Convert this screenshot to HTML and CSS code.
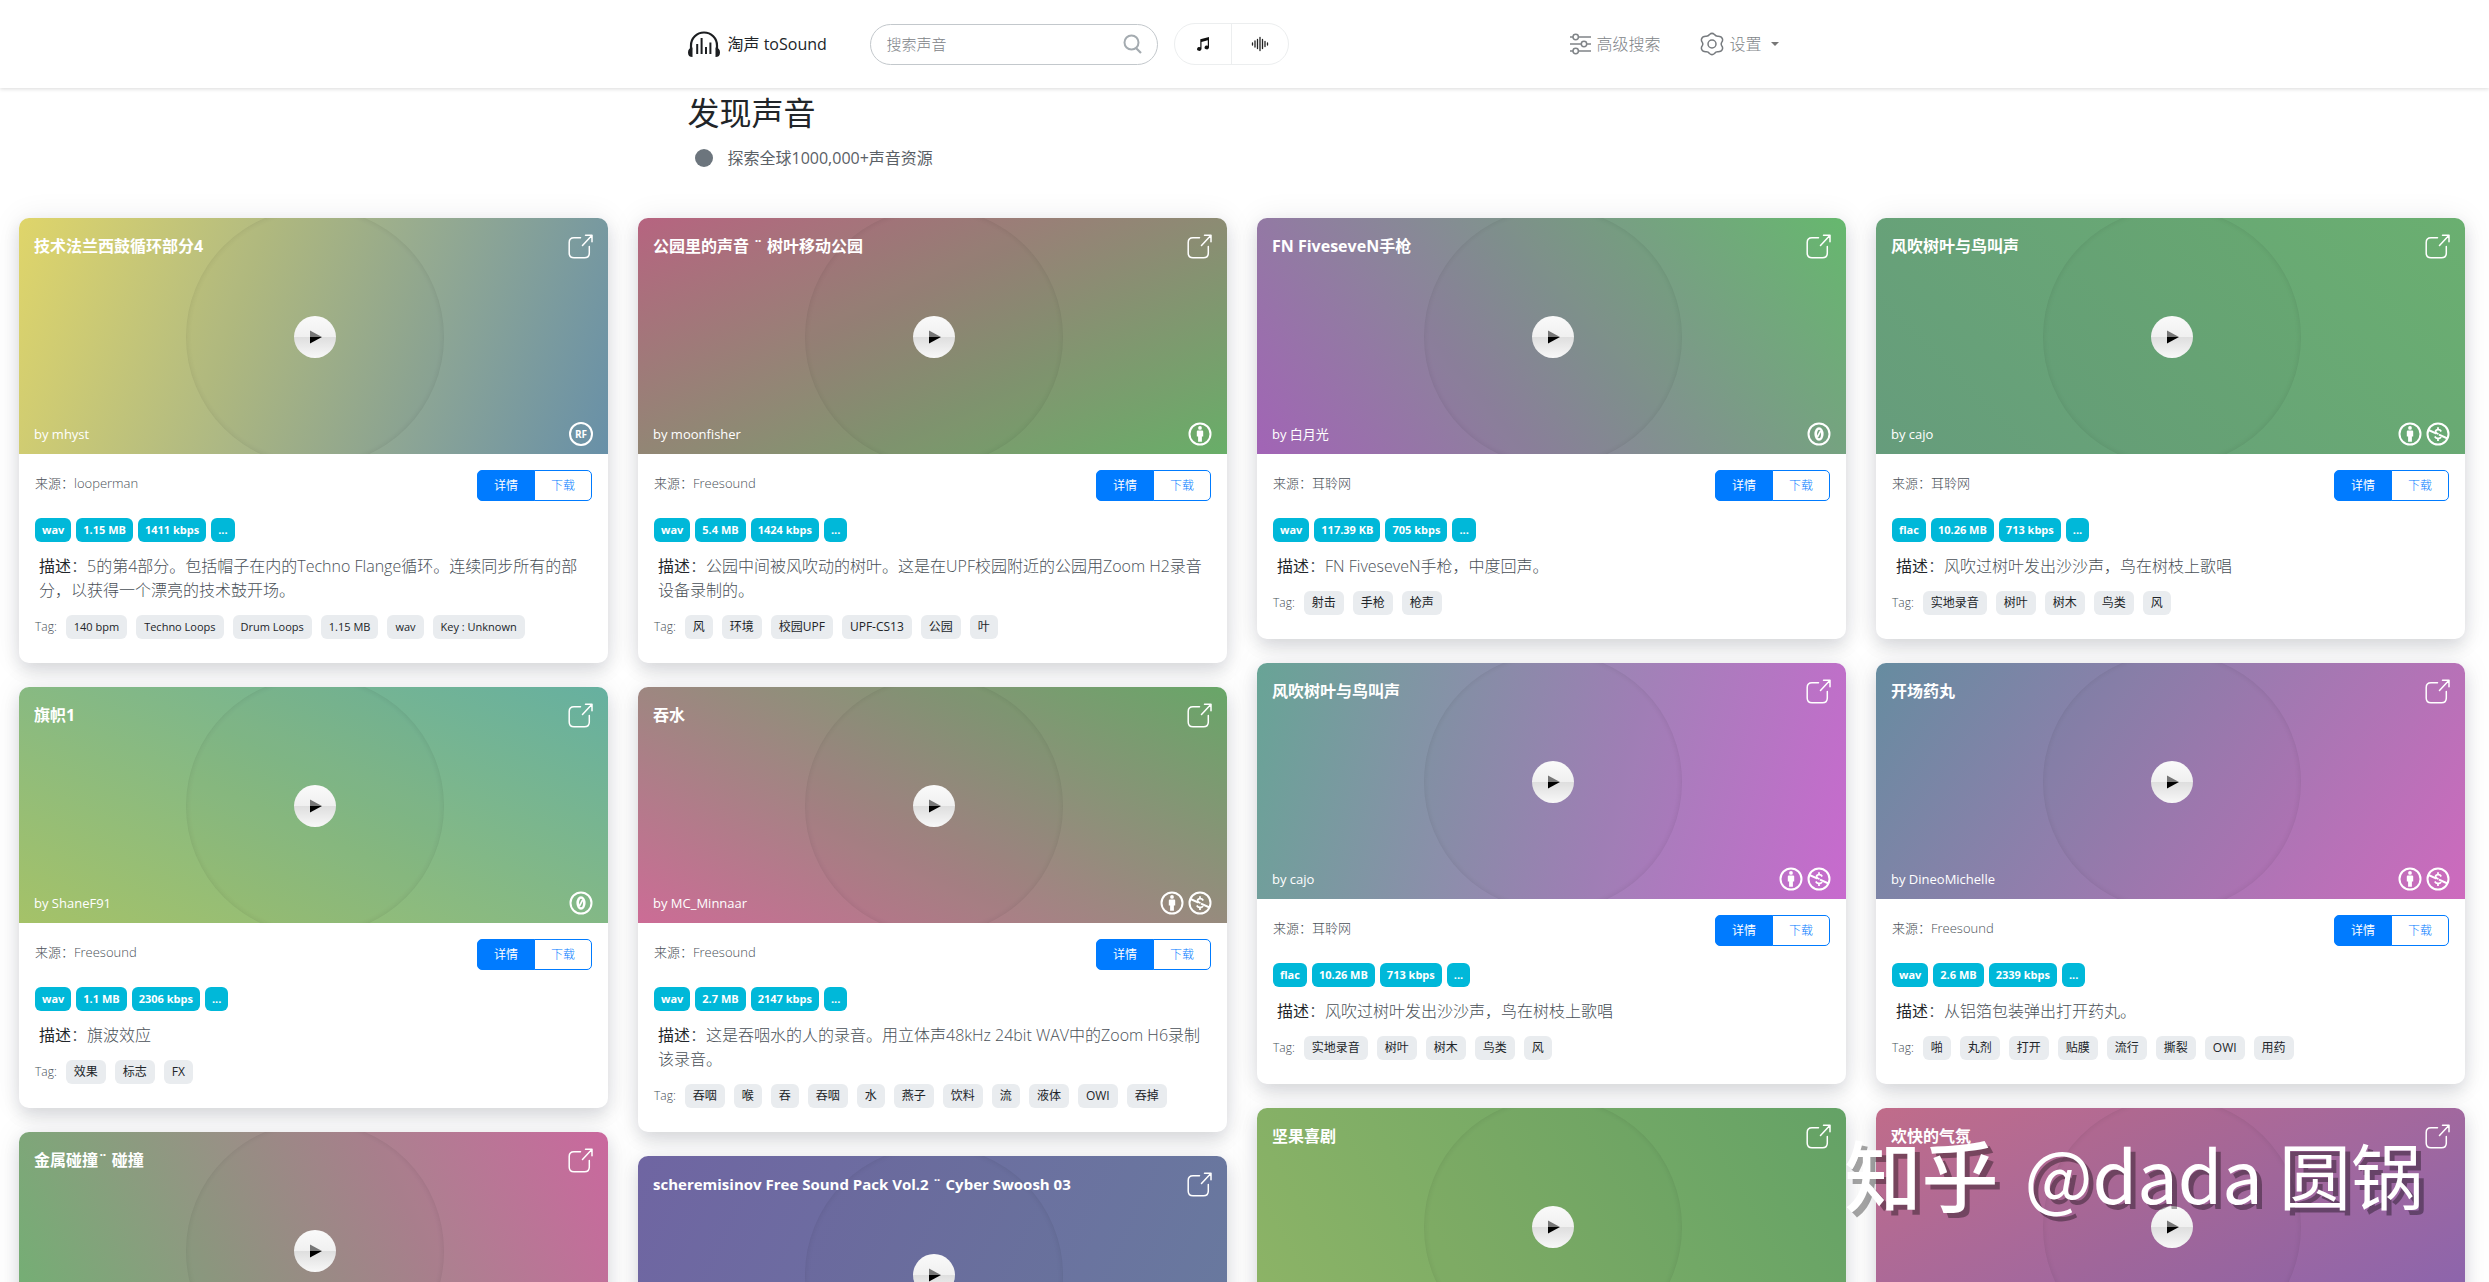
FILE: index.html
```html
<!DOCTYPE html>
<html lang="zh-CN">
<head>
<meta charset="utf-8">
<meta name="viewport" content="width=device-width, initial-scale=1">
<title>淘声 toSound</title>
<link rel="stylesheet" href="styles.css">
</head>
<body>
<svg class="sprite" aria-hidden="true">
  <symbol id="i-open" viewBox="0 0 25 25"><g fill="none" stroke="currentColor" stroke-width="1.5" stroke-linecap="round" stroke-linejoin="round"><path d="M12.5 3.7H6Q1.2 3.7 1.2 8.500V19Q1.200 23.800 6 23.800H16.500Q21.300 23.800 21.300 19V12.500"/><path d="M14.500 11.500 24 1.200M17.500 1.200H24V7.800"/></g></symbol>
  <symbol id="i-by" viewBox="0 0 24 24"><circle cx="12" cy="12" r="10.500" fill="none" stroke="currentColor" stroke-width="2"/><circle cx="12" cy="5.900" r="1.900" fill="currentColor"/><path d="M9.800 8.500h4.400q1 0 1 1v5h-1.300v5.200h-3.800v-5.200H8.800v-5q0-1 1-1z" fill="currentColor"/></symbol>
  <symbol id="i-nc" viewBox="0 0 24 24"><g fill="none" stroke="currentColor" stroke-width="2"><circle cx="12" cy="12" r="10.500"/><path d="M2.500 8 10.500 11.600M13 12.700 21.500 16.500"/><path d="M15.200 9.500Q14.300 7.700 12.200 7.700 9.800 7.700 9.500 9.500M8.800 14.500Q9.800 16.500 12 16.500 14.500 16.500 14.800 14.800M12 5.200v2.500M12 16.500V19M9.500 9.500Q9.600 11 12.500 12.200" stroke-width="1.800"/></g></symbol>
  <symbol id="i-zero" viewBox="0 0 24 24"><g fill="none" stroke="currentColor"><circle cx="12" cy="12" r="10.500" stroke-width="2"/><ellipse cx="12" cy="12" rx="3.300" ry="5.500" stroke-width="2.600"/><path d="M13.800 8.600 10.200 15.400" stroke-width="1.800"/></g></symbol>
  <symbol id="i-play" viewBox="0 0 12 14"><path d="M0 .5 12 7H0z" fill="#777"/><path d="M0 7H12L0 13.500z" fill="#000"/></symbol>
</svg>

<header class="topbar">
  <div class="topbar-inner">
    <a class="brand" href="#">
      <svg class="brand-icon" viewBox="0 0 32 28" aria-hidden="true"><path d="M3 20V15.500a13 13 0 0 1 26 0V20" fill="none" stroke="#1c1e21" stroke-width="2.200"/><path d="M4.500 17.500v9.500Q0 27 0 22.500T4.500 17.500zM27.500 17.500v9.500q4.500 0 4.500-4.500t-4.500-5z" fill="#1c1e21"/><path d="M9.200 14v10M13.600 8v16M18 17v7M22.400 12.500V24" stroke="#1c1e21" stroke-width="2"/></svg>
      <span>淘声 toSound</span>
    </a>
    <form class="search" role="search">
      <input type="search" placeholder="搜索声音" aria-label="搜索声音">
      <svg class="search-icon" viewBox="0 0 20 20" aria-hidden="true"><circle cx="8.500" cy="8.500" r="7" fill="none" stroke="#a4abb0" stroke-width="2"/><path d="M13 14l5 5" stroke="#a4abb0" stroke-width="2.200"/></svg>
    </form>
    <div class="modes">
      <button type="button" aria-label="音乐"><svg width="16" height="16" viewBox="0 0 16 16" fill="#111" aria-hidden="true"><path d="M5.300 3.300 14 1v10.600a2.200 1.900 0 1 1-1.200-1.800V4.200L6.500 5.900v7.200a2.200 1.900 0 1 1-1.200-1.800z"/></svg></button>
      <button type="button" aria-label="音效"><svg width="18" height="16" viewBox="0 0 18 16" aria-hidden="true"><path d="M1.500 7v2M4 5v6M6.500 3.500v9M9 1.500v13M11.500 3.500v9M14 5.500v5M16.500 7v2" stroke="#222" stroke-width="1.300" stroke-linecap="round"/></svg></button>
    </div>
    <nav class="links">
      <a href="#"><svg width="21" height="22" viewBox="0 0 21 22" fill="none" stroke="#808488" stroke-width="1.500" aria-hidden="true"><path d="M0 4h3M8.500 4H21M0 11h11M17 11h4M0 18h3M8.500 18H21"/><circle cx="5.700" cy="4" r="2.700"/><circle cx="14" cy="11" r="2.700"/><circle cx="5.700" cy="18" r="2.700"/></svg>高级搜索</a>
      <a href="#"><svg width="24" height="24" viewBox="0 0 24 24" fill="none" stroke="#777b7f" stroke-width="1.500" stroke-linejoin="round" aria-hidden="true"><path d="M9.500 2.500Q12 .3 14.500 2.500 15.800 4.500 18 4.300 21.500 4.200 22.400 6.800 23 9 21.700 10.300 20.700 12 21.700 13.700 23 15.200 22.400 17.200 21.500 19.800 18 19.700 15.800 19.500 14.500 21.500 12 23.700 9.500 21.500 8.200 19.500 6 19.700 2.500 19.800 1.600 17.200 1 15.200 2.300 13.700 3.300 12 2.300 10.300 1 9 1.600 6.800 2.500 4.200 6 4.300 8.200 4.500 9.500 2.500z"/><circle cx="12" cy="12" r="4"/></svg>设置<i class="caret"></i></a>
    </nav>
  </div>
</header>

<main>
  <section class="intro">
    <h1>发现声音</h1>
    <p><i class="dot"></i>探索全球1000,000+声音资源</p>
  </section>

  <section class="wall">
    <div class="col">
      <article class="card">
        <div class="art art-1"><button class="play" type="button" aria-label="播放"><svg width="12" height="14"><use href="#i-play"/></svg></button>
          <div class="art-row"><h2>技术法兰西鼓循环部分4</h2><a href="#" aria-label="打开"><svg width="25" height="25"><use href="#i-open"/></svg></a></div>
          <div class="art-row"><span>by mhyst</span><span class="lic"><b class="rf">RF</b></span></div></div>
        <div class="info">
          <div class="src"><span>来源：looperman</span><span class="acts"><button type="button">详情</button><button type="button">下载</button></span></div>
          <div class="meta"><b>wav</b><b>1.15 MB</b><b>1411 kbps</b><b>...</b></div>
          <p><em>描述</em>：5的第4部分。包括帽子在内的Techno Flange循环。连续同步所有的部分，以获得一个漂亮的技术鼓开场。</p>
          <div class="tags tags-latin">Tag: <a href="#">140 bpm</a><a href="#">Techno Loops</a><a href="#">Drum Loops</a><a href="#">1.15 MB</a><a href="#">wav</a><a href="#">Key : Unknown</a></div>
        </div>
      </article>
      <article class="card">
        <div class="art art-2"><button class="play" type="button" aria-label="播放"><svg width="12" height="14"><use href="#i-play"/></svg></button>
          <div class="art-row"><h2>旗帜1</h2><a href="#" aria-label="打开"><svg width="25" height="25"><use href="#i-open"/></svg></a></div>
          <div class="art-row"><span>by ShaneF91</span><span class="lic"><svg width="24" height="24"><use href="#i-zero"/></svg></span></div></div>
        <div class="info">
          <div class="src"><span>来源：Freesound</span><span class="acts"><button type="button">详情</button><button type="button">下载</button></span></div>
          <div class="meta"><b>wav</b><b>1.1 MB</b><b>2306 kbps</b><b>...</b></div>
          <p><em>描述</em>：旗波效应</p>
          <div class="tags">Tag: <a href="#">效果</a><a href="#">标志</a><a href="#">FX</a></div>
        </div>
      </article>
      <article class="card">
        <div class="art art-3"><button class="play" type="button" aria-label="播放"><svg width="12" height="14"><use href="#i-play"/></svg></button>
          <div class="art-row"><h2>金属碰撞¨ 碰撞</h2><a href="#" aria-label="打开"><svg width="25" height="25"><use href="#i-open"/></svg></a></div></div>
      </article>
    </div>

    <div class="col">
      <article class="card">
        <div class="art art-4"><button class="play" type="button" aria-label="播放"><svg width="12" height="14"><use href="#i-play"/></svg></button>
          <div class="art-row"><h2>公园里的声音 ¨ 树叶移动公园</h2><a href="#" aria-label="打开"><svg width="25" height="25"><use href="#i-open"/></svg></a></div>
          <div class="art-row"><span>by moonfisher</span><span class="lic"><svg width="24" height="24"><use href="#i-by"/></svg></span></div></div>
        <div class="info">
          <div class="src"><span>来源：Freesound</span><span class="acts"><button type="button">详情</button><button type="button">下载</button></span></div>
          <div class="meta"><b>wav</b><b>5.4 MB</b><b>1424 kbps</b><b>...</b></div>
          <p><em>描述</em>：公园中间被风吹动的树叶。这是在UPF校园附近的公园用Zoom H2录音设备录制的。</p>
          <div class="tags">Tag: <a href="#">风</a><a href="#">环境</a><a href="#">校园UPF</a><a href="#">UPF-CS13</a><a href="#">公园</a><a href="#">叶</a></div>
        </div>
      </article>
      <article class="card">
        <div class="art art-5"><button class="play" type="button" aria-label="播放"><svg width="12" height="14"><use href="#i-play"/></svg></button>
          <div class="art-row"><h2>吞水</h2><a href="#" aria-label="打开"><svg width="25" height="25"><use href="#i-open"/></svg></a></div>
          <div class="art-row"><span>by MC_Minnaar</span><span class="lic"><svg width="24" height="24"><use href="#i-by"/></svg><svg width="24" height="24"><use href="#i-nc"/></svg></span></div></div>
        <div class="info">
          <div class="src"><span>来源：Freesound</span><span class="acts"><button type="button">详情</button><button type="button">下载</button></span></div>
          <div class="meta"><b>wav</b><b>2.7 MB</b><b>2147 kbps</b><b>...</b></div>
          <p><em>描述</em>：这是吞咽水的人的录音。用立体声48kHz 24bit WAV中的Zoom H6录制该录音。</p>
          <div class="tags">Tag: <a href="#">吞咽</a><a href="#">喉</a><a href="#">吞</a><a href="#">吞咽</a><a href="#">水</a><a href="#">燕子</a><a href="#">饮料</a><a href="#">流</a><a href="#">液体</a><a href="#">OWI</a><a href="#">吞掉</a></div>
        </div>
      </article>
      <article class="card">
        <div class="art art-6"><button class="play" type="button" aria-label="播放"><svg width="12" height="14"><use href="#i-play"/></svg></button>
          <div class="art-row"><h2 class="title-latin">scheremisinov Free Sound Pack Vol.2 ¨ Cyber Swoosh 03</h2><a href="#" aria-label="打开"><svg width="25" height="25"><use href="#i-open"/></svg></a></div></div>
      </article>
    </div>

    <div class="col">
      <article class="card">
        <div class="art art-7"><button class="play" type="button" aria-label="播放"><svg width="12" height="14"><use href="#i-play"/></svg></button>
          <div class="art-row"><h2>FN FiveseveN手枪</h2><a href="#" aria-label="打开"><svg width="25" height="25"><use href="#i-open"/></svg></a></div>
          <div class="art-row"><span>by 白月光</span><span class="lic"><svg width="24" height="24"><use href="#i-zero"/></svg></span></div></div>
        <div class="info">
          <div class="src"><span>来源：耳聆网</span><span class="acts"><button type="button">详情</button><button type="button">下载</button></span></div>
          <div class="meta"><b>wav</b><b>117.39 KB</b><b>705 kbps</b><b>...</b></div>
          <p><em>描述</em>：FN FiveseveN手枪，中度回声。</p>
          <div class="tags">Tag: <a href="#">射击</a><a href="#">手枪</a><a href="#">枪声</a></div>
        </div>
      </article>
      <article class="card">
        <div class="art art-8"><button class="play" type="button" aria-label="播放"><svg width="12" height="14"><use href="#i-play"/></svg></button>
          <div class="art-row"><h2>风吹树叶与鸟叫声</h2><a href="#" aria-label="打开"><svg width="25" height="25"><use href="#i-open"/></svg></a></div>
          <div class="art-row"><span>by cajo</span><span class="lic"><svg width="24" height="24"><use href="#i-by"/></svg><svg width="24" height="24"><use href="#i-nc"/></svg></span></div></div>
        <div class="info">
          <div class="src"><span>来源：耳聆网</span><span class="acts"><button type="button">详情</button><button type="button">下载</button></span></div>
          <div class="meta"><b>flac</b><b>10.26 MB</b><b>713 kbps</b><b>...</b></div>
          <p><em>描述</em>：风吹过树叶发出沙沙声，鸟在树枝上歌唱</p>
          <div class="tags">Tag: <a href="#">实地录音</a><a href="#">树叶</a><a href="#">树木</a><a href="#">鸟类</a><a href="#">风</a></div>
        </div>
      </article>
      <article class="card">
        <div class="art art-9"><button class="play" type="button" aria-label="播放"><svg width="12" height="14"><use href="#i-play"/></svg></button>
          <div class="art-row"><h2>坚果喜剧</h2><a href="#" aria-label="打开"><svg width="25" height="25"><use href="#i-open"/></svg></a></div></div>
      </article>
    </div>

    <div class="col">
      <article class="card">
        <div class="art art-10"><button class="play" type="button" aria-label="播放"><svg width="12" height="14"><use href="#i-play"/></svg></button>
          <div class="art-row"><h2>风吹树叶与鸟叫声</h2><a href="#" aria-label="打开"><svg width="25" height="25"><use href="#i-open"/></svg></a></div>
          <div class="art-row"><span>by cajo</span><span class="lic"><svg width="24" height="24"><use href="#i-by"/></svg><svg width="24" height="24"><use href="#i-nc"/></svg></span></div></div>
        <div class="info">
          <div class="src"><span>来源：耳聆网</span><span class="acts"><button type="button">详情</button><button type="button">下载</button></span></div>
          <div class="meta"><b>flac</b><b>10.26 MB</b><b>713 kbps</b><b>...</b></div>
          <p><em>描述</em>：风吹过树叶发出沙沙声，鸟在树枝上歌唱</p>
          <div class="tags">Tag: <a href="#">实地录音</a><a href="#">树叶</a><a href="#">树木</a><a href="#">鸟类</a><a href="#">风</a></div>
        </div>
      </article>
      <article class="card">
        <div class="art art-11"><button class="play" type="button" aria-label="播放"><svg width="12" height="14"><use href="#i-play"/></svg></button>
          <div class="art-row"><h2>开场药丸</h2><a href="#" aria-label="打开"><svg width="25" height="25"><use href="#i-open"/></svg></a></div>
          <div class="art-row"><span>by DineoMichelle</span><span class="lic"><svg width="24" height="24"><use href="#i-by"/></svg><svg width="24" height="24"><use href="#i-nc"/></svg></span></div></div>
        <div class="info">
          <div class="src"><span>来源：Freesound</span><span class="acts"><button type="button">详情</button><button type="button">下载</button></span></div>
          <div class="meta"><b>wav</b><b>2.6 MB</b><b>2339 kbps</b><b>...</b></div>
          <p><em>描述</em>：从铝箔包装弹出打开药丸。</p>
          <div class="tags">Tag: <a href="#">啪</a><a href="#">丸剂</a><a href="#">打开</a><a href="#">贴膜</a><a href="#">流行</a><a href="#">撕裂</a><a href="#">OWI</a><a href="#">用药</a></div>
        </div>
      </article>
      <article class="card">
        <div class="art art-12"><button class="play" type="button" aria-label="播放"><svg width="12" height="14"><use href="#i-play"/></svg></button>
          <div class="art-row"><h2>欢快的气氛</h2><a href="#" aria-label="打开"><svg width="25" height="25"><use href="#i-open"/></svg></a></div></div>
      </article>
    </div>
  </section>
</main>

<div class="watermark"><b>知乎</b><span>@dada 圆锅</span></div>
</body>
</html>
```

FILE: styles.css
```css
* { box-sizing: border-box; }

body {
  margin: 0;
  height: 100vh;
  overflow: hidden;
  position: relative;
  background: #fff;
  color: #212529;
  font: 300 16px/24px "Open Sans", "Noto Sans CJK SC", sans-serif;
}

a { color: inherit; text-decoration: none; }
button { font: inherit; cursor: pointer; }
svg { display: block; flex: none; }
.sprite { position: absolute; width: 0; height: 0; }

/* Top bar */
.topbar {
  height: 88px;
  background: #fff;
  box-shadow: 0 1px 4px rgba(0, 0, 0, .15);
}
.topbar-inner,
.intro { max-width: 1114px; margin: 0 auto; }
.topbar-inner { height: 100%; display: flex; align-items: center; }
.brand { display: flex; align-items: center; gap: 8px; width: 182px; font-weight: 400; font-size: 16px; white-space: nowrap; }
.brand-icon { width: 32px; height: 28px; }

.search {
  display: flex;
  align-items: center;
  width: 288px;
  height: 41px;
  padding: 0 14px 0 16px;
  border: 1px solid #c3c8cc;
  border-radius: 21px;
}
.search input {
  flex: 1;
  min-width: 0;
  padding: 0;
  border: 0;
  outline: 0;
  background: none;
  font: inherit;
  font-size: 15px;
}
.search input::placeholder { color: #7d8287; opacity: 1; }
.search-icon { width: 20px; height: 20px; }

.modes { display: flex; width: 115px; height: 42px; margin-left: 16px; border: 1px solid #eceeef; border-radius: 21px; }
.modes button { flex: 1; display: grid; place-items: center; padding: 0; border: 0; background: none; }
.modes button + button { border-left: 1px solid #eceeef; }

.links { display: flex; gap: 40px; margin-left: auto; padding-right: 23px; color: #808488; }
.links a { display: flex; align-items: center; gap: 5px; white-space: nowrap; }
.caret { margin-left: 4px; border: 4px solid transparent; border-top-color: #777; border-bottom: 0; }

/* Intro */
.intro { height: 130px; padding-top: 6px; }
.intro h1 { margin: 0; font-size: 32px; line-height: 38px; font-weight: 400; }
.intro p { display: flex; align-items: center; gap: 15px; margin: 14px 0 0; padding-left: 7px; color: #5a6066; font-weight: 400; }
.dot { width: 18px; height: 18px; border-radius: 50%; background: #6c757d; }

/* Card wall */
.wall { display: grid; grid-template-columns: repeat(4, 1fr); gap: 30px; padding: 0 24px 0 19px; align-items: start; }
.col { display: grid; gap: 24px; min-width: 0; }
.card {
  min-width: 0;
  border-radius: 10px;
  background: #fff;
  box-shadow: 0 8px 16px rgba(20, 30, 50, .13), 0 0 30px rgba(20, 30, 50, .08);
}

.art {
  position: relative;
  display: flex;
  flex-direction: column;
  justify-content: space-between;
  height: 236px;
  padding: 16px 15px 8px 15px;
  border-radius: 10px 10px 0 0;
  overflow: hidden;
  color: #fff;
}
.art::before {
  content: "";
  position: absolute;
  inset: 0 0 0 2px;
  margin: -10px auto;
  width: 256px;
  height: 256px;
  border: 1px solid rgba(0, 0, 0, .05);
  border-radius: 50%;
  background: rgba(0, 0, 0, .015);
  box-shadow: inset 0 0 6px rgba(0, 0, 0, .08);
}
.play {
  position: absolute;
  z-index: 1;
  inset: 2px 0 0 2px;
  margin: auto;
  display: grid;
  place-items: center;
  width: 42px;
  height: 42px;
  padding: 0 0 0 3px;
  border: 0;
  border-radius: 50%;
  background: linear-gradient(#fafafa, #f0f0f0 50%, #dedede 50%, #f8f8f8);
}
.art-row { display: flex; justify-content: space-between; align-items: center; height: 24px; font-size: 13px; font-weight: 400; position: relative; }
.art-row h2 { margin: 0; font-size: 16px; line-height: 24px; font-weight: 700; }
.art-row .title-latin { font-size: 15px; }
.lic { display: flex; gap: 4px; }
.rf { width: 24px; height: 24px; border: 2px solid #fff; border-radius: 50%; font-size: 10px; line-height: 20px; text-align: center; }

.art-1 { background: linear-gradient(110deg, #dfd56a, #6890a8); }
.art-2 { background: linear-gradient(25deg, #a5c268, #66b0a0); }
.art-3 { background: linear-gradient(65deg, #70b272, #ca689e); }
.art-4 { background: linear-gradient(155deg, #b66480, #68ae68); }
.art-5 { background: linear-gradient(25deg, #cc6c96, #68a668); }
.art-6 { background: linear-gradient(115deg, #6f65a2, #687a9e); }
.art-7 { background: linear-gradient(50deg, #a264b6, #66b86e); }
.art-8 { background: linear-gradient(105deg, #68a496, #c86ace); }
.art-9 { background: linear-gradient(60deg, #8eb466, #64a266); }
.art-10 { background: linear-gradient(45deg, #669c7c, #6aaf70); }
.art-11 { background: linear-gradient(125deg, #668ca0, #ce6abe); }
.art-12 { background: linear-gradient(155deg, #c06c8a, #8664b0); }

.info { padding: 16px 16px 24px; }
.src { display: flex; justify-content: space-between; height: 31px; font-size: 13px; line-height: 26px; color: #495057; }
.acts { display: flex; }
.acts button {
  width: 58px;
  height: 31px;
  padding: 0;
  border: 1px solid #007bff;
  font-size: 12px;
  line-height: 28px;
  font-weight: 400;
}
.acts button:first-child { border-radius: 5px 0 0 5px; background: #007bff; color: #fff; }
.acts button:last-child { border-radius: 0 5px 5px 0; margin-left: -1px; background: #fff; color: #007bff; font-weight: 300; }

.meta { display: flex; gap: 5px; margin-top: 17px; }
.meta b,
.tags a { height: 24px; padding: 0 8px; border-radius: 6px; font-size: 12px; line-height: 24px; white-space: nowrap; }
.meta b { padding: 0 7px; background: #00b8d9; color: #fff; font-size: 11px; font-weight: 700; }

.info p { margin: 12px 4px 13px; color: #495057; }
.info em { font-style: normal; color: #212529; font-weight: 400; }

.tags { display: flex; gap: 9px; height: 24px; font-size: 12px; color: #495057; white-space: nowrap; }
.tags a { background: #e9ecef; color: #212529; font-weight: 400; }
.tags-latin a { font-size: 11px; }

/* Overlaid signature */
.watermark {
  position: absolute;
  right: 66px;
  bottom: 57px;
  z-index: 5;
  display: flex;
  gap: 26px;
  color: #fff;
  font: 400 72px/104px "Noto Sans CJK SC", sans-serif;
  text-shadow: 5px 5px 0 rgba(0, 0, 0, .35);
  white-space: nowrap;
  pointer-events: none;
}
.watermark b { font-size: 77px; font-weight: 500; }
```
